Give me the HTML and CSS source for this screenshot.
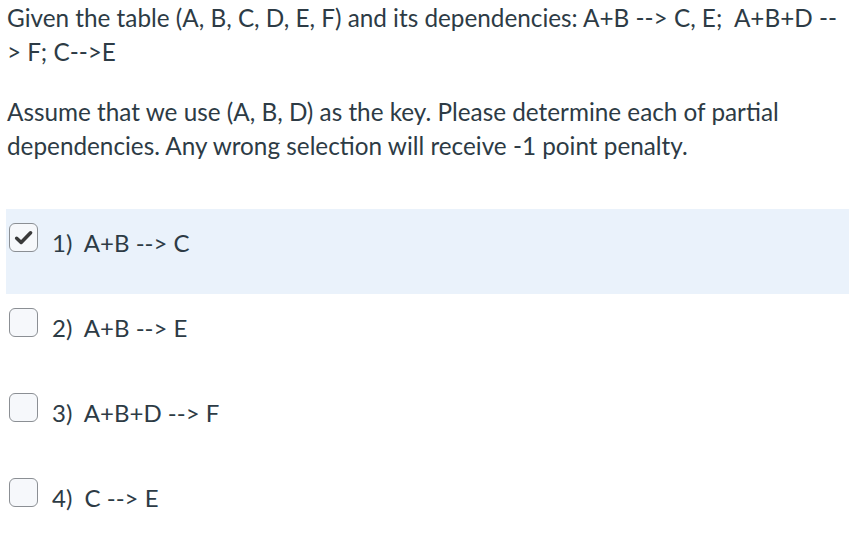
FILE: index.html
```html
<!DOCTYPE html>
<html>
<head>
<meta charset="utf-8">
<link rel="stylesheet" href="styles.css">
</head>
<body>
<div class="question">
  <p class="q-text">Given the table (A, B, C, D, E, F) and its dependencies: A+B --&gt; C, E;&nbsp; A+B+D --&gt; F; C--&gt;E</p>
  <p class="q-text">Assume that we use (A, B, D) as the key. Please determine each of partial dependencies. Any wrong selection will receive -1 point penalty.</p>
  <div class="options">
    <div class="option selected">
      <span class="box checked"><svg viewBox="0 0 16 16" width="16" height="16"><path d="M2.8 8.6 L6.2 11.8 L13.4 4.4" fill="none" stroke="#3a3a3a" stroke-width="2.7" stroke-linecap="round" stroke-linejoin="round"/></svg></span>
      <span class="label">1)&nbsp; A+B --&gt; C</span>
    </div>
    <div class="option">
      <span class="box"></span>
      <span class="label">2)&nbsp; A+B --&gt; E</span>
    </div>
    <div class="option">
      <span class="box"></span>
      <span class="label">3)&nbsp; A+B+D --&gt; F</span>
    </div>
    <div class="option">
      <span class="box"></span>
      <span class="label">4)&nbsp; C --&gt; E</span>
    </div>
  </div>
</div>
</body>
</html>
```

FILE: styles.css
```css
html, body {
  margin: 0;
  padding: 0;
  background: #ffffff;
}
.question {
  padding: 1px 6px 0 6px;
  font-family: Lato, "Liberation Sans", sans-serif;
  color: #2d3b45;
}
.q-text {
  margin: 0 0 26px 0;
  font-size: 24.3px;
  line-height: 34px;
  padding: 0 8px 0 1px;
}
.options {
  margin-top: 46px;
  display: flex;
  flex-direction: column;
}
.option {
  display: flex;
  align-items: flex-start;
  height: 85px;
  box-sizing: border-box;
  padding: 14px 0 0 3px;
}
.option.selected {
  background: #eaf2fb;
}
.box {
  width: 29px;
  height: 29px;
  box-sizing: border-box;
  border: 1px solid #8b8f94;
  border-radius: 6px;
  background: #f6f8fb;
  display: flex;
  align-items: center;
  justify-content: center;
  flex: none;
}
.box svg {
  width: 21px;
  height: 21px;
}
.label {
  margin: 5px 0 0 14px;
  font-size: 24px;
  line-height: 29px;
  color: #2d3b45;
}
```
